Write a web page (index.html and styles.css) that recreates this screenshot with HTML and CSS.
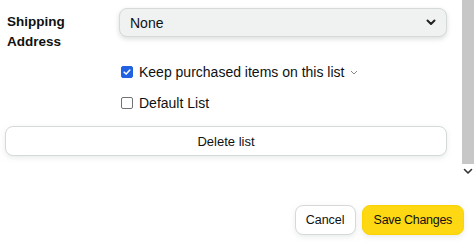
FILE: index.html
```html
<!DOCTYPE html>
<html>
<head>
<meta charset="utf-8">
<link rel="stylesheet" href="styles.css">
</head>
<body>
<div class="page">
  <div class="scroll">
    <div class="content">
      <div class="row">
        <div class="label">Shipping<br>Address</div>
        <div class="select">
          <span>None</span>
          <svg class="chev" width="10" height="7" viewBox="0 0 10 7"><path d="M1.5 1.5 L5 5 L8.5 1.5" fill="none" stroke="#222" stroke-width="2" stroke-linecap="round" stroke-linejoin="round"/></svg>
        </div>
      </div>
      <div class="checks">
        <label class="check">
          <span class="box on"><svg width="12" height="12" viewBox="0 0 12 12"><path d="M2.6 6.2 L5 8.5 L9.4 3.6" fill="none" stroke="#fff" stroke-width="1.8" stroke-linecap="round" stroke-linejoin="round"/></svg></span>
          <span class="ctext">Keep purchased items on this list</span>
          <svg class="mini" width="8" height="5" viewBox="0 0 8 5"><path d="M1 1 L4 4 L7 1" fill="none" stroke="#888" stroke-width="1"/></svg>
        </label>
        <label class="check">
          <span class="box"></span>
          <span class="ctext">Default List</span>
        </label>
      </div>
      <button class="btn delete">Delete list</button>
    </div>
    <div class="scrollbar">
      <div class="thumb"></div>
      <div class="arrow"><svg width="10" height="7" viewBox="0 0 10 7"><path d="M1.5 1.5 L5 5 L8.5 1.5" fill="none" stroke="#333" stroke-width="1.6" stroke-linecap="round" stroke-linejoin="round"/></svg></div>
    </div>
  </div>
  <div class="footer">
    <button class="btn cancel">Cancel</button>
    <button class="btn save">Save Changes</button>
  </div>
</div>
</body>
</html>
```
FILE: styles.css
```css
* { box-sizing: border-box; }
html, body { margin: 0; padding: 0; background: #fff; }
body {
  font-family: "Liberation Sans", Arial, sans-serif;
  color: #0f1111;
  font-size: 14px;
}
.page { width: 474px; height: 244px; display: flex; flex-direction: column; }
.scroll { display: flex; height: 178px; }
.content { flex: 1; padding: 8px 15px 0 5px; }
.row { display: flex; }
.label {
  width: 114px;
  padding: 4px 0 0 2px;
  font-weight: bold;
  font-size: 13.5px;
  line-height: 20px;
}
.select {
  flex: 1;
  height: 29px;
  background: #f0f2f2;
  border: 1px solid #d5d9d9;
  border-radius: 8px;
  box-shadow: 0 2px 5px rgba(15,17,17,0.15);
  display: flex;
  align-items: center;
  justify-content: space-between;
  padding: 0 10px 0 10px;
  font-size: 14px;
}
.chev { display: block; }
.checks { padding: 11px 0 0 116px; display: flex; flex-direction: column; gap: 13px; }
.check { display: flex; align-items: center; height: 18px; }
.box {
  width: 12px; height: 12px;
  border: 1.5px solid #6f7373;
  border-radius: 2px;
  margin-right: 6px;
  display: flex; align-items: center; justify-content: center;
  background: #fff;
}
.box.on { background: #2162e2; border-color: #2162e2; }
.box svg { display: block; }
.ctext { font-size: 14px; }
.mini { margin-left: 6px; margin-top: 1px; }
.btn {
  font-family: inherit;
  font-size: 13px;
  color: #0f1111;
  border-radius: 8px;
  cursor: pointer;
}
.delete {
  display: block;
  width: 100%;
  height: 30px;
  margin-top: 14px;
  background: #fff;
  border: 1px solid #d5d9d9;
  box-shadow: 0 2px 5px rgba(213,217,217,0.5);
}
.scrollbar { width: 12px; display: flex; flex-direction: column; }
.thumb { height: 164px; background: #c7c7c7; }
.arrow { height: 14px; display: flex; align-items: center; justify-content: center; }
.arrow svg { display: block; }
.footer {
  flex: 1;
  display: flex;
  justify-content: flex-end;
  align-items: flex-start;
  gap: 6px;
  padding: 27px 10px 0 0;
}
.cancel {
  height: 30px;
  padding: 0 10px;
  font-size: 12.5px;
  background: #fff;
  border: 1px solid #d5d9d9;
  box-shadow: 0 2px 5px rgba(213,217,217,0.5);
}
.save {
  height: 30px;
  padding: 0 11px;
  font-size: 12.5px;
  letter-spacing: -0.3px;
  background: #ffd814;
  border: 1px solid #fcd200;
  box-shadow: 0 2px 5px rgba(213,217,217,0.5);
}
```
